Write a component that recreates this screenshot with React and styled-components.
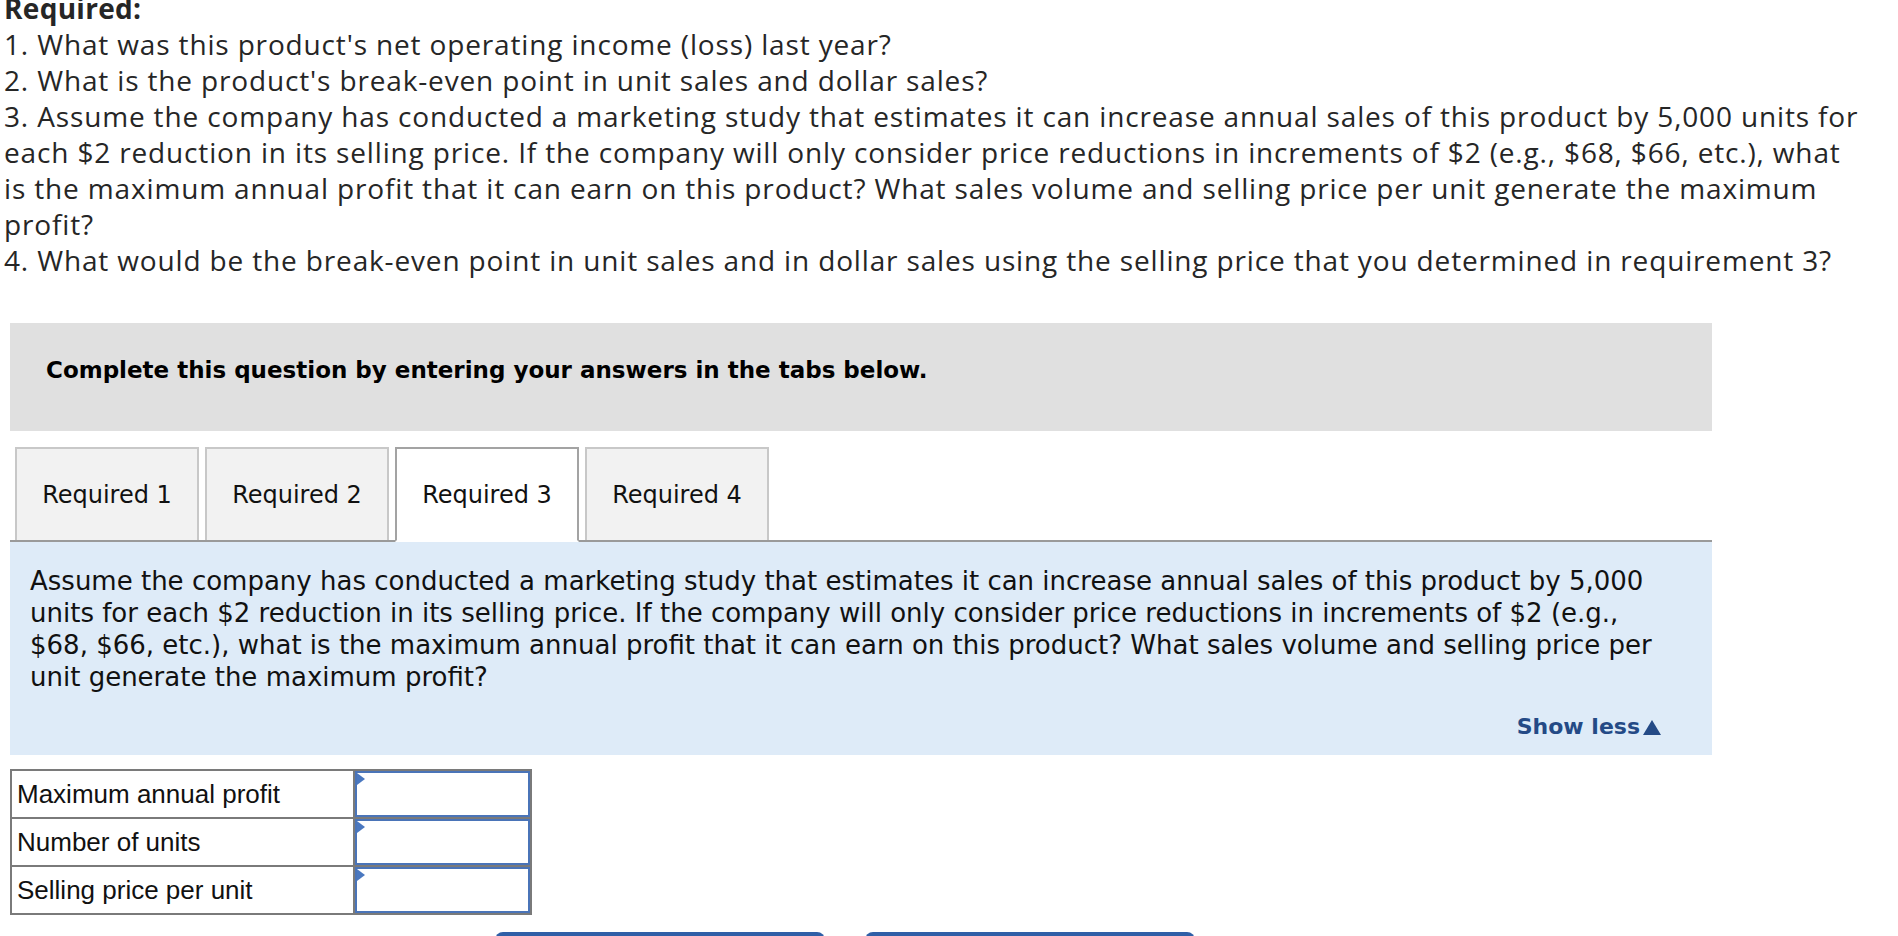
import React from "react";
import styled, { createGlobalStyle } from "styled-components";

const GlobalStyle = createGlobalStyle`
    html, body {
        margin: 0;
        padding: 0;
        background: #fff;
        overflow: hidden;
    }

    * {
        box-sizing: border-box;
    }
`;

const tabs = ["Required 1", "Required 2", "Required 3", "Required 4"];
const rows = ["Maximum annual profit", "Number of units", "Selling price per unit"];

const App = () => {
    return (
        <Page>
            <GlobalStyle />
            <Intro>
                <Heading>Required:</Heading>
                <Item>1. What was this product's net operating income (loss) last year?</Item>
                <Item>2. What is the product's break-even point in unit sales and dollar sales?</Item>
                <Item>
                    3. Assume the company has conducted a marketing study that estimates it can increase annual sales of this product by 5,000 units for
                    <br />
                    each $2 reduction in its selling price. If the company will only consider price reductions in increments of $2 (e.g., $68, $66, etc.), what
                    <br />
                    is the maximum annual profit that it can earn on this product? What sales volume and selling price per unit generate the maximum
                    <br />
                    profit?
                </Item>
                <Item>
                    4. What would be the break-even point in unit sales and in dollar sales using the selling price that you determined in requirement 3?
                </Item>
            </Intro>

            <Instructions>
                <InstructionText>Complete this question by entering your answers in the tabs below.</InstructionText>
            </Instructions>

            <TabBar>
                {tabs.map((tab) => (
                    <Tab key={tab} $active={tab === "Required 3"}>
                        {tab}
                    </Tab>
                ))}
            </TabBar>

            <Panel>
                <PanelText>
                    Assume the company has conducted a marketing study that estimates it can increase annual sales of this product by 5,000
                    <br />
                    units for each $2 reduction in its selling price. If the company will only consider price reductions in increments of $2 (e.g.,
                    <br />
                    $68, $66, etc.), what is the maximum annual profit that it can earn on this product? What sales volume and selling price per
                    <br />
                    unit generate the maximum profit?
                </PanelText>
                <ShowLess>
                    Show less
                    <Arrow />
                </ShowLess>
            </Panel>

            <AnswerTable>
                <tbody>
                    {rows.map((row) => (
                        <tr key={row}>
                            <LabelCell>{row}</LabelCell>
                            <InputCell>
                                <AnswerInput type="text" aria-label={row} />
                            </InputCell>
                        </tr>
                    ))}
                </tbody>
            </AnswerTable>

            <NavRow>
                <NavButton>« Required 2</NavButton>
                <NavButton>Required 4 »</NavButton>
            </NavRow>
        </Page>
    );
};

const Page = styled.div`
    width: 1898px;
    margin-top: -10px;
    padding-bottom: 40px;
`;

const Intro = styled.div`
    padding-left: 4px;
    font-family: "Open Sans", "Liberation Sans", sans-serif;
    font-size: 28px;
    line-height: 36px;
    letter-spacing: 0.85px;
    color: #262626;
`;

const Heading = styled.div`
    font-weight: 700;
    letter-spacing: 0.3px;
`;

const Item = styled.div`
    white-space: nowrap;
`;

const Instructions = styled.div`
    margin: 45px 0 0 10px;
    width: 1702px;
    height: 108px;
    background: #e0e0e0;
    padding: 33px 0 0 36px;
`;

const InstructionText = styled.h2`
    margin: 0;
    font-family: "DejaVu Sans", Verdana, sans-serif;
    font-size: 23px;
    line-height: 28px;
    font-weight: 700;
    color: #000;
`;

const TabBar = styled.div`
    margin: 16px 0 0 10px;
    width: 1702px;
    display: flex;
    gap: 6px;
    padding-left: 5px;
    border-bottom: 2px solid #9a9a9a;
`;

const Tab = styled.div`
    width: 184px;
    height: ${(p) => (p.$active ? "95px" : "93px")};
    margin-bottom: ${(p) => (p.$active ? "-2px" : "0")};
    display: flex;
    align-items: center;
    justify-content: center;
    background: ${(p) => (p.$active ? "#fff" : "#f2f2f2")};
    border: 2px solid ${(p) => (p.$active ? "#a3a3a3" : "#c8c8c8")};
    border-bottom: ${(p) => (p.$active ? "2px solid #fff" : "none")};
    font-family: "DejaVu Sans", Verdana, sans-serif;
    font-size: 24px;
    color: #111;
`;

const Panel = styled.div`
    margin-left: 10px;
    width: 1702px;
    height: 213px;
    background: #deebf8;
    padding: 23px 0 0 20px;
    display: flex;
    flex-direction: column;
`;

const PanelText = styled.p`
    margin: 0;
    white-space: nowrap;
    font-family: "DejaVu Sans", Verdana, sans-serif;
    font-size: 26px;
    line-height: 32px;
    color: #111;
`;

const ShowLess = styled.div`
    margin-top: 19px;
    align-self: flex-end;
    margin-right: 51px;
    display: flex;
    align-items: center;
    font-family: "DejaVu Sans", Verdana, sans-serif;
    font-size: 22px;
    line-height: 30px;
    font-weight: 700;
    color: #244a86;
`;

const Arrow = styled.span`
    width: 0;
    height: 0;
    margin-left: 3px;
    border-left: 9.5px solid transparent;
    border-right: 9.5px solid transparent;
    border-bottom: 15px solid #244a86;
`;

const AnswerTable = styled.table`
    margin: 14px 0 0 10px;
    border-collapse: collapse;
    border: 2px solid #7a7a7a;

    tr {
        height: 48px;
    }
`;

const LabelCell = styled.td`
    width: 343px;
    padding: 0 0 0 5px;
    border: 2px solid #7a7a7a;
    font-family: "Liberation Sans", Arial, sans-serif;
    font-size: 26px;
    color: #111;
    vertical-align: middle;
`;

const InputCell = styled.td`
    position: relative;
    width: 177px;
    padding: 0;
    border: 2px solid #7a7a7a;

    &::before {
        content: "";
        position: absolute;
        top: 2px;
        left: 2px;
        border-top: 6px solid transparent;
        border-bottom: 6px solid transparent;
        border-left: 8px solid #4a78c0;
    }
`;

const AnswerInput = styled.input`
    display: block;
    width: 100%;
    height: 46px;
    margin: 0;
    border: 2.5px solid #4a74b8;
    background: #fff;
    outline: none;
`;

const NavRow = styled.div`
    margin-top: 17px;
    padding-left: 495px;
    display: flex;
    gap: 40px;
`;

const NavButton = styled.button`
    width: 330px;
    height: 56px;
    border: none;
    border-radius: 8px;
    background: #2f5fa7;
    color: #fff;
    font-family: "DejaVu Sans", Verdana, sans-serif;
    font-size: 22px;
    font-weight: 700;
`;

export default App;
